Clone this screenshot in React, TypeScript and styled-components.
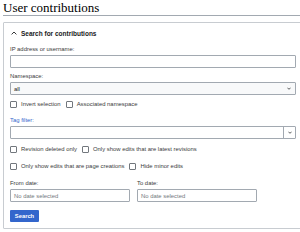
import styled, { createGlobalStyle } from "styled-components";

const GlobalStyle = createGlobalStyle`
  html, body {
    margin: 0;
    padding: 0;
    background: #ffffff;
    overflow: hidden;
  }
  body {
    font-family: "Liberation Sans", Arial, sans-serif;
    color: #202122;
  }
`;

const Page = styled.div`
  width: 310px;
  padding-left: 3px;
  box-sizing: border-box;
`;

const Title = styled.h1`
  margin: 0;
  font-family: "Liberation Serif", "Times New Roman", serif;
  font-weight: 400;
  font-size: 13px;
  line-height: 15px;
  color: #000;
  border-bottom: 1px solid #a2a9b1;
`;

const Panel = styled.fieldset`
  margin: 6px 0 0;
  width: 300px;
  box-sizing: border-box;
  border: 1px solid #c8ccd1;
  border-radius: 1px;
  padding: 6px 6px 6px;
  display: flex;
  flex-direction: column;
  min-width: 0;
`;

const Legend = styled.div`
  display: flex;
  align-items: center;
  gap: 4px;
  height: 8px;
  padding-left: 1px;
  font-size: 6.5px;
  font-weight: 700;
  color: #202122;
  margin-bottom: 9px;
`;

const FieldLabel = styled.div<{ $blue?: boolean }>`
  font-size: 5.9px;
  line-height: 7px;
  height: 7px;
  margin-bottom: 2px;
  color: ${(p) => (p.$blue ? "#3366cc" : "#3a3b3c")};
  white-space: nowrap;
`;

const TextBox = styled.div<{ $bg?: string }>`
  width: 100%;
  height: 13px;
  box-sizing: border-box;
  border: 1px solid #a2a9b1;
  border-radius: 1px;
  background: ${(p) => p.$bg || "#ffffff"};
  display: flex;
  align-items: center;
  font-size: 5.9px;
  color: #202122;
`;

const BoxText = styled.span<{ $muted?: boolean }>`
  flex: 1;
  padding-left: 3px;
  color: ${(p) => (p.$muted ? "#72777d" : "#202122")};
  white-space: nowrap;
`;

const Handle = styled.span<{ $divider?: boolean }>`
  width: 12px;
  height: 100%;
  display: flex;
  align-items: center;
  justify-content: center;
  border-left: ${(p) => (p.$divider ? "1px solid #a2a9b1" : "none")};
  box-sizing: border-box;
`;

const Gap = styled.div<{ $h: number }>`
  height: ${(p) => p.$h}px;
  flex: none;
`;

const CheckRow = styled.div`
  display: flex;
  align-items: center;
  height: 8px;
  gap: 5px;
`;

const Check = styled.label`
  display: flex;
  align-items: center;
  gap: 4px;
  font-size: 5.9px;
  color: #3a3b3c;
  white-space: nowrap;
`;

const Box = styled.span`
  width: 7px;
  height: 7px;
  box-sizing: border-box;
  border: 1px solid #72777d;
  border-radius: 1px;
  background: #fff;
  flex: none;
`;

const DateRow = styled.div`
  display: flex;
  gap: 7px;
`;

const DateField = styled.div`
  display: flex;
  flex-direction: column;
  width: 120px;
`;

const ButtonRow = styled.div`
  display: flex;
`;

const Button = styled.button`
  width: 29px;
  height: 12px;
  padding: 0;
  border: none;
  border-radius: 1px;
  background: #3366cc;
  color: #fff;
  font-family: "Liberation Sans", Arial, sans-serif;
  font-weight: 700;
  font-size: 5.8px;
  line-height: 12px;
  text-align: center;
`;

function Chevron({ up }: { up?: boolean }) {
  return (
    <svg width={up ? 6 : 4} height={up ? 4 : 3} viewBox="0 0 6 4">
      <path
        d={up ? "M0.6 3.4 L3 1 L5.4 3.4" : "M0.6 0.8 L3 3.2 L5.4 0.8"}
        fill="none"
        stroke="#202122"
        strokeWidth={up ? 0.9 : 1.1}
      />
    </svg>
  );
}

function CheckItem({ label }: { label: string }) {
  return (
    <Check>
      <Box />
      {label}
    </Check>
  );
}

export default function App() {
  return (
    <>
      <GlobalStyle />
      <Page>
        <Title>User contributions</Title>
        <Panel>
          <Legend>
            <Chevron up />
            Search for contributions
          </Legend>

          <FieldLabel>IP address or username:</FieldLabel>
          <TextBox />
          <Gap $h={5} />

          <FieldLabel>Namespace:</FieldLabel>
          <TextBox $bg="#f8f9fa">
            <BoxText>all</BoxText>
            <Handle>
              <Chevron />
            </Handle>
          </TextBox>
          <Gap $h={5} />

          <CheckRow>
            <CheckItem label="Invert selection" />
            <CheckItem label="Associated namespace" />
          </CheckRow>
          <Gap $h={9} />

          <FieldLabel $blue>Tag filter:</FieldLabel>
          <TextBox>
            <BoxText />
            <Handle $divider>
              <Chevron />
            </Handle>
          </TextBox>
          <Gap $h={6} />

          <CheckRow>
            <CheckItem label="Revision deleted only" />
            <CheckItem label="Only show edits that are latest revisions" />
          </CheckRow>
          <Gap $h={9} />
          <CheckRow>
            <CheckItem label="Only show edits that are page creations" />
            <CheckItem label="Hide minor edits" />
          </CheckRow>
          <Gap $h={10} />

          <DateRow>
            <DateField>
              <FieldLabel>From date:</FieldLabel>
              <TextBox>
                <BoxText $muted>No date selected</BoxText>
              </TextBox>
            </DateField>
            <DateField>
              <FieldLabel>To date:</FieldLabel>
              <TextBox>
                <BoxText $muted>No date selected</BoxText>
              </TextBox>
            </DateField>
          </DateRow>
          <Gap $h={8} />

          <ButtonRow>
            <Button>Search</Button>
          </ButtonRow>
        </Panel>
      </Page>
    </>
  );
}
